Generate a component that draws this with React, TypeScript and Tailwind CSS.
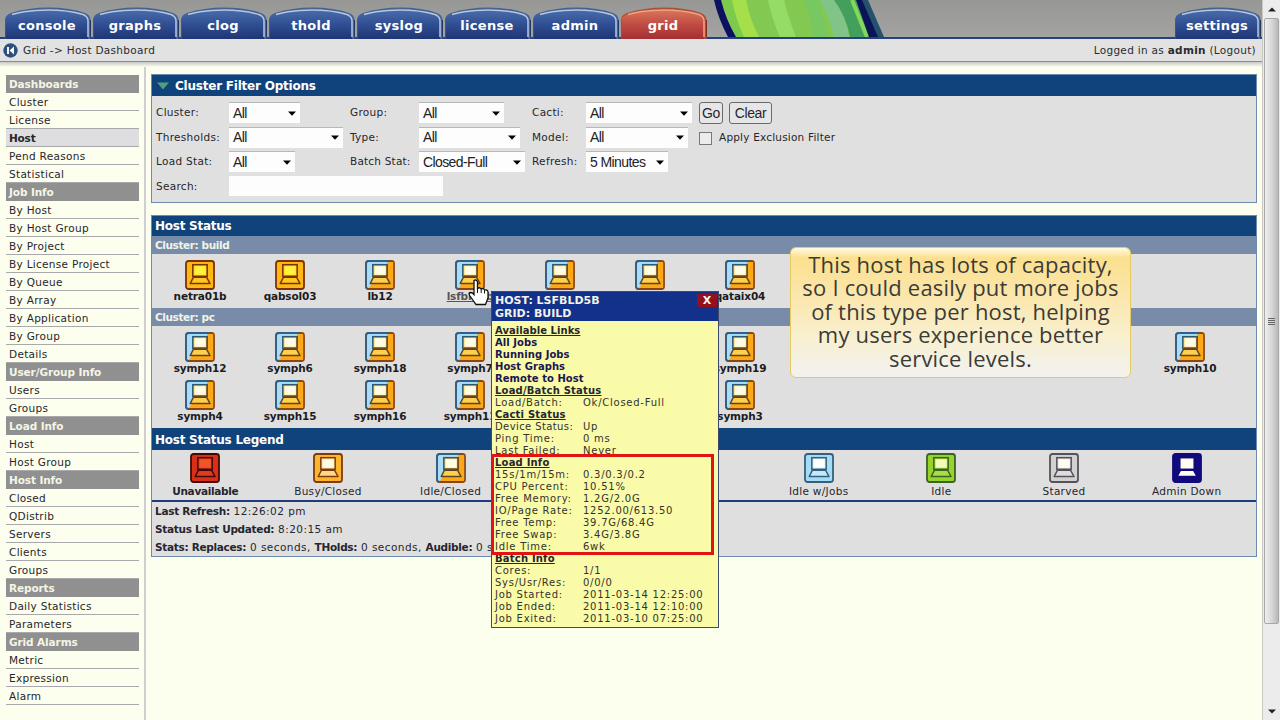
import clsx from "clsx"

type Tone = "busy" | "mixed" | "down" | "closed" | "jobs" | "idle" | "starved" | "admin"

interface Host {
  name?: string
  tone: Tone
  hovered?: boolean
}

const tabs = ["console", "graphs", "clog", "thold", "syslog", "license", "admin", "grid"]

const menu = [
  { title: "Dashboards", items: ["Cluster", "License", "Host", "Pend Reasons", "Statistical"] },
  {
    title: "Job Info",
    items: [
      "By Host",
      "By Host Group",
      "By Project",
      "By License Project",
      "By Queue",
      "By Array",
      "By Application",
      "By Group",
      "Details",
    ],
  },
  { title: "User/Group Info", items: ["Users", "Groups"] },
  { title: "Load Info", items: ["Host", "Host Group"] },
  { title: "Host Info", items: ["Closed", "QDistrib", "Servers", "Clients", "Groups"] },
  { title: "Reports", items: ["Daily Statistics", "Parameters"] },
  { title: "Grid Alarms", items: ["Metric", "Expression", "Alarm"] },
]

const buildHosts: Host[] = [
  { name: "netra01b", tone: "busy" },
  { name: "qabsol03", tone: "busy" },
  { name: "lb12", tone: "mixed" },
  { name: "lsfbld5b", tone: "mixed", hovered: true },
  { tone: "mixed" },
  { tone: "mixed" },
  { name: "qataix04", tone: "mixed" },
]

const pcHosts: Host[] = [
  { name: "symph12", tone: "mixed" },
  { name: "symph6", tone: "mixed" },
  { name: "symph18", tone: "mixed" },
  { name: "symph7", tone: "mixed" },
  { tone: "mixed" },
  { tone: "mixed" },
  { name: "symph19", tone: "mixed" },
  { tone: "mixed" },
  { tone: "mixed" },
  { tone: "mixed" },
  { tone: "mixed" },
  { name: "symph10", tone: "mixed" },
  { name: "symph4", tone: "mixed" },
  { name: "symph15", tone: "mixed" },
  { name: "symph16", tone: "mixed" },
  { name: "symph11", tone: "mixed" },
  { tone: "mixed" },
  { tone: "mixed" },
  { name: "symph3", tone: "mixed" },
]

const legend: Host[] = [
  { name: "Unavailable", tone: "down" },
  { name: "Busy/Closed", tone: "closed" },
  { name: "Idle/Closed", tone: "mixed" },
  { tone: "jobs" },
  { tone: "jobs" },
  { name: "Idle w/Jobs", tone: "jobs" },
  { name: "Idle", tone: "idle" },
  { name: "Starved", tone: "starved" },
  { name: "Admin Down", tone: "admin" },
]

const tones = {
  busy: { fill: "#fdb813", line: "#7d3206", screen: "#fff23c", base: "#ffc81e" },
  mixed: { fill: "#a9dcf8", line: "#2c5878", screen: "#fffce6", base: "#ffd04c" },
  down: { fill: "#d92f16", line: "#3d0c08", screen: "#f2542a", base: "#e23a1c" },
  closed: { fill: "#fdb52c", line: "#7d3c10", screen: "#fffbe4", base: "#ffd98a" },
  jobs: { fill: "#a6dbf6", line: "#33607c", screen: "#ffffff", base: "#c8e9f8" },
  idle: { fill: "#97d429", line: "#3c6226", screen: "#f4fbb4", base: "#a9dc45" },
  starved: { fill: "#d2d0d3", line: "#555357", screen: "#fffdf0", base: "#dddddd" },
  admin: { fill: "#100a7c", line: "#100a7c", screen: "#fffff0", base: "#fffff0" },
}

const details = [
  { heading: "Load/Batch Status", rows: [["Load/Batch:", "Ok/Closed-Full"]] },
  {
    heading: "Cacti Status",
    rows: [
      ["Device Status:", "Up"],
      ["Ping Time:", "0 ms"],
      ["Last Failed:", "Never"],
    ],
  },
  {
    heading: "Load Info",
    rows: [
      ["15s/1m/15m:", "0.3/0.3/0.2"],
      ["CPU Percent:", "10.51%"],
      ["Free Memory:", "1.2G/2.0G"],
      ["IO/Page Rate:", "1252.00/613.50"],
      ["Free Temp:", "39.7G/68.4G"],
      ["Free Swap:", "3.4G/3.8G"],
      ["Idle Time:", "6wk"],
    ],
  },
  {
    heading: "Batch Info",
    rows: [
      ["Cores:", "1/1"],
      ["Sys/Usr/Res:", "0/0/0"],
      ["Job Started:", "2011-03-14 12:25:00"],
      ["Job Ended:", "2011-03-14 12:10:00"],
      ["Job Exited:", "2011-03-10 07:25:00"],
    ],
  },
]

function HostIcon({ tone }: { tone: Tone }) {
  const c = tones[tone]
  const mixed = tone === "mixed"
  return (
    <svg width="30" height="30" viewBox="0 0 30 30" className="block shrink-0">
      <rect x="1" y="1" width="28" height="28" rx="2.5" fill={c.fill} stroke={mixed ? "#8a4512" : c.line} strokeWidth="1.8" />
      {mixed && (
        <>
          <path d="M22 1.900H28.100V28.100H4L8 22L22 15Z" fill="#fba916" />
          <path d="M24 1H3.500A2.500 2.500 0 0 0 1 3.500V26.500A2.500 2.500 0 0 0 3 29" fill="none" stroke="#2f6288" strokeWidth="1.800" />
        </>
      )}
      <rect x="7.800" y="4.700" width="14.400" height="11.600" fill={c.base} stroke={c.line} strokeWidth="1.500" />
      <rect x="9.500" y="6.200" width="11.200" height="8.600" fill={c.screen} />
      {mixed && <path d="M22.200 4.700V16.300H9" fill="none" stroke="#7a4a1c" strokeWidth="1.500" />}
      <path
        d="M8.500 17.200H21.500L25 23.500H5.200Z"
        fill={c.base}
        stroke={mixed ? "#5c4326" : c.line}
        strokeWidth="1.500"
        strokeLinejoin="round"
      />
    </svg>
  )
}

function Tab({ label, red }: { label: string; red?: boolean }) {
  const id = `tab-${label}`
  return (
    <div className="relative h-[39px] w-[88px] shrink-0">
      <svg width="88" height="39" viewBox="0 0 88 39" className="absolute inset-0">
        <defs>
          <linearGradient id={id} x1="0" y1="0" x2="0" y2="1">
            <stop offset="0" stopColor={red ? "#d9765c" : "#4a6bab"} />
            <stop offset="0.5" stopColor={red ? "#c04b42" : "#2f4f92"} />
            <stop offset="1" stopColor={red ? "#a52f32" : "#1e3675"} />
          </linearGradient>
        </defs>
        <path d="M1 39V20Q1 15 7 13Q24 7.500 44 7.500Q66 7.500 81 13Q86.500 15 86.500 20V39Z" fill={red ? "#a8503f" : "#46638f"} />
        <path d="M1.500 39V20Q2 16 7 14.500Q24 10 44 10Q64 10 79 14.500Q84 16.500 84 21V39Z" fill={`url(#${id})`} />
        <path d="M8 14.500Q14 12.800 20 11.800Q32 10 44 10Q64 10 79 14.500Q84 16.500 84 21V37" fill="none" stroke={red ? "#f0a57c" : "#b4c8e2"} strokeWidth="1.500" />
        <path d="M86.500 37V20" stroke={red ? "#8c2426" : "#24386c"} strokeWidth="1" />
      </svg>
      <span className="relative flex h-full items-center justify-center pt-[12px] pr-[2px] text-[13px] font-bold tracking-[0.3px] text-white">
        {label}
      </span>
    </div>
  )
}

function Banner() {
  return (
    <div className="flex h-[39px] shrink-0 border-b-2 border-[#27417c] bg-gradient-to-b from-[#979796] to-[#a3a3a2] pl-[4px]">
      {tabs.map((tab) => (
        <Tab key={tab} label={tab} red={tab === "grid"} />
      ))}
      <svg width="174" height="37" viewBox="0 0 174 37" className="ml-[6px] shrink-0">
        <path d="M2 0H148L166 37H22Z" fill="#83c951" />
        <path d="M9 0H18Q22 20 31 37H22Z" fill="#7ccb4c" />
        <path d="M18 0H32Q36 20 45 37H30Q22 20 18 0Z" fill="#a5e04a" />
        <path d="M54 0H70Q75 20 82 37H66Q58 20 54 0Z" fill="#95dc67" />
        <path d="M90 0H104Q110 16 114 37H99Q97 20 90 0Z" fill="#78c862" />
        <path d="M106 0H124Q132 18 135 37H120Q116 18 106 0Z" fill="#82c488" />
        <path d="M120 0H144L157 37H136Q132 16 120 0Z" fill="#43a05c" />
        <path d="M138 0L153 37" stroke="#85d65a" strokeWidth="4" />
        <path d="M142 0H150L169 37H155Z" fill="#0c1458" />
        <path d="M148 0H154L170 37H164Z" fill="#24516e" />
        <path d="M0 0H7Q12 20 22 37H14Q4 18 0 0Z" fill="#0b1060" />
      </svg>
      <div className="ml-auto">
        <Tab label="settings" />
      </div>
    </div>
  )
}

function Sidebar() {
  return (
    <nav className="w-[146px] shrink-0 border-r-2 border-[#cfcfd2] pt-[8px] pl-[6px] text-[10.5px] tracking-[0.3px] text-[#26262c]">
      {menu.map((group) => (
        <div key={group.title} className="w-[133px]">
          <div className="h-[18px] bg-[#909090] pl-[3px] leading-[19px] font-bold tracking-[-0.1px] text-[#f5f5e6]">
            {group.title}
          </div>
          {group.items.map((item) => (
            <div
              key={item}
              className={clsx(
                "h-[18px] border-b border-[#a9a9ad] pl-[3px] leading-[19px]",
                group.title === "Dashboards" && item === "Host" && "bg-[#dedee0] font-bold tracking-[-0.2px]"
              )}
            >
              {item}
            </div>
          ))}
        </div>
      ))}
    </nav>
  )
}

function Select({ value, className }: { value: string; className: string }) {
  return (
    <div
      className={clsx(
        "flex h-[21px] items-center justify-between border-t border-[#b8b8b8] bg-[#fdfdfd] pr-[4px] pl-[4px] font-['Liberation_Sans',sans-serif] text-[14px] tracking-[-0.6px] text-[#222]",
        className
      )}
    >
      <span className="whitespace-nowrap">{value}</span>
      <svg width="8" height="5" viewBox="0 0 8 5">
        <path d="M0 0.500H8L4 4.800Z" fill="#000" />
      </svg>
    </div>
  )
}

const filterGrid = "grid grid-cols-[73px_121px_69px_113px_54px_113px_1fr] items-center"

function FilterPanel() {
  return (
    <section className="h-[129px] border border-[#6f8bab] bg-[#e1e0e1]">
      <div className="flex h-[21px] items-center bg-[#10427b] pt-px pl-[5px] text-[12px] font-bold tracking-[-0.22px] text-white">
        <svg width="12" height="8" viewBox="0 0 12 8" className="mr-[6px]">
          <path d="M0 0.500H12L6 7.500Z" fill="#4f9f7c" />
        </svg>
        Cluster Filter Options
      </div>
      <div className="pt-[4px] pl-[4px] text-[10.5px] tracking-[0.3px] text-[#26262c]">
        <div className={clsx(filterGrid, "h-[25px]")}>
          <span>Cluster:</span>
          <Select value="All" className="w-[71px]" />
          <span>Group:</span>
          <Select value="All" className="w-[85px]" />
          <span>Cacti:</span>
          <Select value="All" className="w-[106px]" />
          <div className="flex gap-[6px] font-['Liberation_Sans',sans-serif] text-[14px] tracking-[-0.4px]">
            <button className="h-[22px] w-[24px] rounded-[3px] border border-[#6b6b6b] bg-[#e6e6e6] leading-[20px]">Go</button>
            <button className="h-[22px] w-[43px] rounded-[3px] border border-[#6b6b6b] bg-[#e6e6e6] leading-[20px]">Clear</button>
          </div>
        </div>
        <div className={clsx(filterGrid, "h-[24px]")}>
          <span className="pt-px">Thresholds:</span>
          <Select value="All" className="w-[114px]" />
          <span className="pt-px">Type:</span>
          <Select value="All" className="w-[101px]" />
          <span className="pt-px">Model:</span>
          <Select value="All" className="w-[102px]" />
          <div className="flex items-center gap-[7px] pt-[2px] tracking-[0.2px]">
            <span className="h-[13px] w-[13px] border border-[#77777c] bg-[#ececec]" />
            Apply Exclusion Filter
          </div>
        </div>
        <div className={clsx(filterGrid, "h-[25px]")}>
          <span>Load Stat:</span>
          <Select value="All" className="w-[66px]" />
          <span className="tracking-[0.2px]">Batch Stat:</span>
          <Select value="Closed-Full" className="w-[106px]" />
          <span>Refresh:</span>
          <Select value="5 Minutes" className="w-[82px]" />
        </div>
        <div className={clsx(filterGrid, "h-[24px]")}>
          <span className="pt-px">Search:</span>
          <div className="h-[20px] w-[214px] bg-[#fdfdfd]" />
        </div>
      </div>
    </section>
  )
}

function PanelTitle({ children, className }: { children: string; className: string }) {
  return (
    <div className={clsx("bg-[#10427b] pl-[3px] text-[12px] font-bold tracking-[-0.25px] text-white", className)}>
      {children}
    </div>
  )
}

function ClusterBar({ name }: { name: string }) {
  return (
    <div className="h-[18px] bg-[#788ca9] pl-[3px] text-[10.5px] leading-[18px] font-bold tracking-[-0.4px] text-[#f2f3e8]">
      Cluster: {name}
    </div>
  )
}

function HostGrid({ hosts, className }: { hosts: Host[]; className: string }) {
  return (
    <div className={clsx("grid grid-cols-[repeat(12,90px)] content-start pt-[6px] pl-[3px]", className)}>
      {hosts.map((host, i) => (
        <div key={i} className="flex h-[48px] flex-col items-center">
          <HostIcon tone={host.tone} />
          <span
            className={clsx(
              "text-[10.5px] leading-[12px] font-bold tracking-[-0.15px]",
              host.hovered ? "text-[#55555a] underline" : "text-[#1c1c20]"
            )}
          >
            {host.name}
          </span>
        </div>
      ))}
    </div>
  )
}

function StatusPanel() {
  return (
    <section className="mt-[12px] h-[342px] border border-[#6f8bab] bg-[#dfdfe0]">
      <PanelTitle className="h-[20px] leading-[21px]">Host Status</PanelTitle>
      <ClusterBar name="build" />
      <HostGrid hosts={buildHosts} className="h-[54px]" />
      <ClusterBar name="pc" />
      <HostGrid hosts={pcHosts} className="h-[102px]" />
      <PanelTitle className="h-[22px] leading-[24px]">Host Status Legend</PanelTitle>
      <div className="grid h-[52px] grid-cols-9 border-b-2 border-[#1f3a80] pt-[3px]">
        {legend.map((entry, i) => (
          <div key={i} className="flex flex-col items-center pr-[16px]">
            <HostIcon tone={entry.tone} />
            <span
              className={clsx(
                "pt-[2px] text-[10.5px] leading-[12px] text-[#26262c]",
                entry.tone === "down" ? "font-bold tracking-[-0.3px]" : "tracking-[0.3px]"
              )}
            >
              {entry.name}
            </span>
          </div>
        ))}
      </div>
      <div className="pl-[3px] text-[10.5px] leading-[18px] tracking-[0.45px] text-[#26262c] [&_b]:tracking-[-0.3px]">
        <p>
          <b>Last Refresh:</b> 12:26:02 pm
        </p>
        <p>
          <b>Status Last Updated:</b> 8:20:15 am
        </p>
        <p>
          <b>Stats: Replaces:</b> 0 seconds, <b>THolds:</b> 0 seconds, <b>Audible:</b> 0 seconds
        </p>
      </div>
    </section>
  )
}

function HostPopup() {
  return (
    <div className="absolute top-[291px] left-[491px] h-[337px] w-[228px] border border-[#3d4a6e] bg-[#f9fba8]">
      <div className="flex h-[29px] justify-between bg-[#11318a] pt-[2px] pl-[3px] text-[11px] leading-[13px] font-bold text-[#f3f3ea]">
        <div>
          HOST: LSFBLD5B
          <br />
          GRID: BUILD
        </div>
        <span className="mr-px h-[13px] w-[20px] bg-[#94101c] text-center">X</span>
      </div>
      <div className="pt-[4px] pl-[3px] text-[10px] leading-[12px] tracking-[0.75px] text-[#33332c]">
        <div className="font-bold tracking-[0.05px] text-[#1b1650]">
          <p className="text-[#26262c] underline">Available Links</p>
          <p>All Jobs</p>
          <p>Running Jobs</p>
          <p>Host Graphs</p>
          <p>Remote to Host</p>
        </div>
        {details.map((group) => (
          <div key={group.heading}>
            <p className="font-bold tracking-[0.2px] text-[#26262c] underline">{group.heading}</p>
            {group.rows.map(([label, value]) => (
              <div key={label} className="flex">
                <span
                  className={clsx(
                    "w-[88px] shrink-0 whitespace-nowrap",
                    label === "Device Status:" && "tracking-[0.4px]"
                  )}
                >
                  {label}
                </span>
                <span className="whitespace-nowrap">{value}</span>
              </div>
            ))}
          </div>
        ))}
      </div>
    </div>
  )
}

function Callout() {
  return (
    <div className="absolute top-[247px] left-[790px] h-[131px] w-[341px] rounded-[6px] border border-[#e6cb62] bg-[linear-gradient(to_bottom,#fffbe0_0px,#fbe08e_10px,#fbe7ae_50px,#f8f0d0_90px,#f3f1ea_120px)] pt-[5px] text-center font-['Open_Sans','Noto_Sans',sans-serif] text-[22px] leading-[23.4px] tracking-[0.2px] whitespace-nowrap text-[#3b3b38]">
      This host has lots of capacity,
      <br />
      so I could easily put more jobs
      <br />
      of this type per host, helping
      <br />
      my users experience better
      <br />
      service levels.
    </div>
  )
}

function Scrollbar() {
  return (
    <div className="flex w-[18px] shrink-0 flex-col items-center border-l border-[#c9c9c4] bg-[#ececec]">
      <div className="flex h-[18px] items-center">
        <svg width="8" height="5" viewBox="0 0 8 5">
          <path d="M0 4.500H8L4 0.500Z" fill="#222" />
        </svg>
      </div>
      <div className="flex h-[606px] w-[15px] flex-col items-center justify-center gap-px rounded-[2px] border border-[#a8a8a8] bg-gradient-to-r from-[#efefef] via-[#d8d8d8] to-[#b9b9bb]">
        <span className="h-px w-[7px] bg-[#666]" />
        <span className="h-px w-[7px] bg-[#666]" />
        <span className="h-px w-[7px] bg-[#666]" />
        <span className="h-px w-[7px] bg-[#666]" />
      </div>
      <div className="mt-auto flex h-[18px] items-center">
        <svg width="8" height="5" viewBox="0 0 8 5">
          <path d="M0 0.500H8L4 4.500Z" fill="#222" />
        </svg>
      </div>
    </div>
  )
}

export default function App() {
  return (
    <div className="relative flex h-[720px] w-[1280px] overflow-hidden bg-[#fcfeee] font-['DejaVu_Sans',sans-serif]">
      <div className="flex w-[1262px] flex-col">
        <Banner />
        <div className="flex h-[23px] shrink-0 items-center border-b border-[#8b8b8d] bg-[#e2e2e2] pr-[6px] pl-[3px] text-[10.5px] tracking-[0.3px] text-[#2b2b2e]">
          <svg width="15" height="15" viewBox="0 0 15 15" className="mr-[5px]">
            <circle cx="7.500" cy="7.500" r="7.200" fill="#2d4f7d" />
            <path d="M4 4H6V11H4ZM11 3.500V11.500L6.500 7.500Z" fill="#f4f6fa" />
          </svg>
          <span className="pt-[2px]">Grid -&gt; Host Dashboard</span>
          <span className="ml-auto pt-[2px]">
            Logged in as <b>admin</b> (Logout)
          </span>
        </div>
        <div className="h-[5px] shrink-0 bg-gradient-to-b from-[#c9c9c6] to-[#fcfeee]" />
        <div className="flex flex-1">
          <Sidebar />
          <main className="flex-1 pt-[7px] pr-[5px] pl-[5px]">
            <FilterPanel />
            <StatusPanel />
          </main>
        </div>
      </div>
      <Scrollbar />
      <Callout />
      <HostPopup />
      <div className="absolute top-[454px] left-[491px] h-[101px] w-[223px] border-3 border-[#e11414]" />
      <svg width="22" height="27" viewBox="0 0 22 27" className="absolute top-[279px] left-[468px]">
        <path
          d="M6 1.500Q8.500 0 9.500 3V9.500Q12 7.800 13.200 10Q15.500 8.600 16.500 11Q19.500 10.200 20 13V19L17.500 25.500H8L2 17Q0 14 2.500 13.500Q4.500 13.500 6 15.500Z"
          fill="#fff"
          stroke="#111"
          strokeWidth="1.300"
        />
        <path d="M9.500 9.500V14M13.200 10V14M16.500 11V14.500" stroke="#111" strokeWidth="1" />
      </svg>
    </div>
  )
}
